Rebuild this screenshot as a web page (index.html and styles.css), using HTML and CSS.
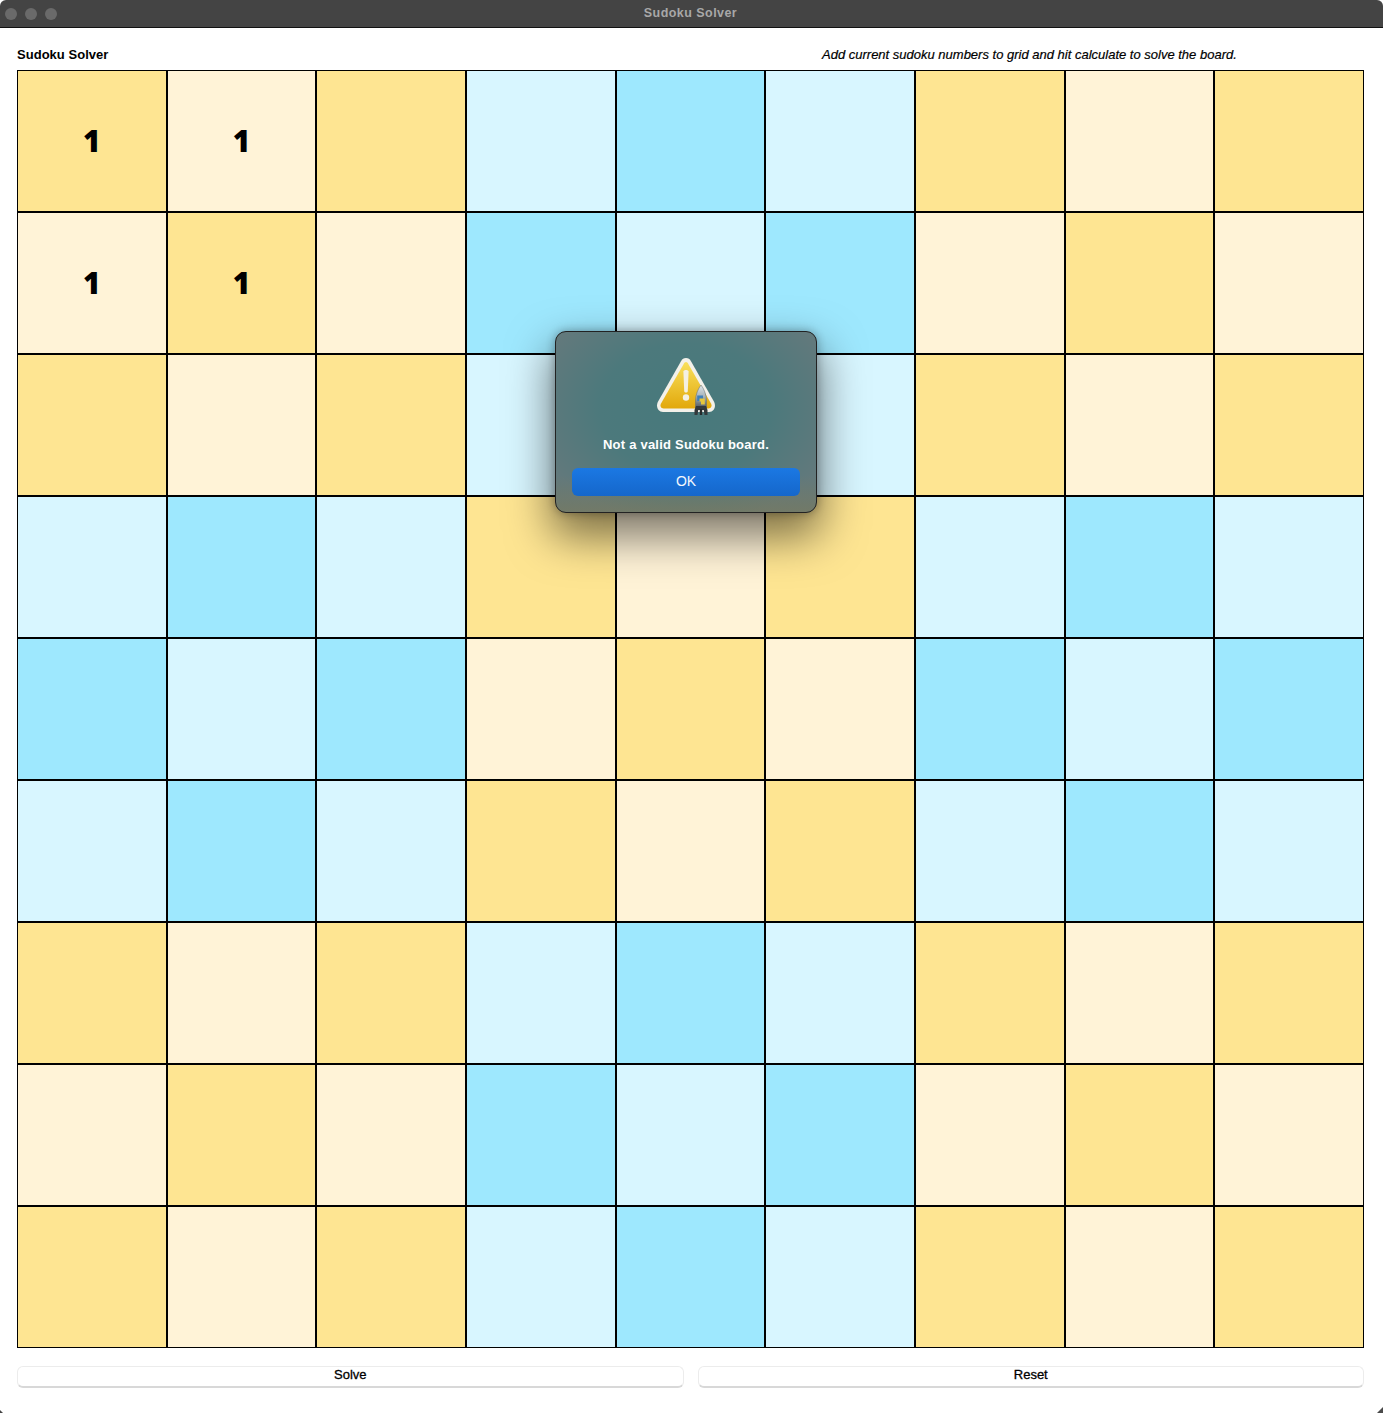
FILE: index.html
```html
<!DOCTYPE html>
<html lang="en">
<head>
<meta charset="utf-8">
<title>Sudoku Solver</title>
<link rel="stylesheet" href="styles.css">
</head>
<body>
<div class="window">
  <header class="titlebar">
    <div class="lights"><span class="light"></span><span class="light"></span><span class="light"></span></div>
    <div class="title">Sudoku Solver</div>
  </header>
  <main class="content">
    <div class="heading">
      <h1 class="app-name">Sudoku Solver</h1>
      <p class="hint">Add current sudoku numbers to grid and hit calculate to solve the board.</p>
    </div>
    <div class="board">
      <div class="cell y">1</div><div class="cell c">1</div><div class="cell y"></div><div class="cell l"></div><div class="cell b"></div><div class="cell l"></div><div class="cell y"></div><div class="cell c"></div><div class="cell y"></div>
      <div class="cell c">1</div><div class="cell y">1</div><div class="cell c"></div><div class="cell b"></div><div class="cell l"></div><div class="cell b"></div><div class="cell c"></div><div class="cell y"></div><div class="cell c"></div>
      <div class="cell y"></div><div class="cell c"></div><div class="cell y"></div><div class="cell l"></div><div class="cell b"></div><div class="cell l"></div><div class="cell y"></div><div class="cell c"></div><div class="cell y"></div>
      <div class="cell l"></div><div class="cell b"></div><div class="cell l"></div><div class="cell y"></div><div class="cell c"></div><div class="cell y"></div><div class="cell l"></div><div class="cell b"></div><div class="cell l"></div>
      <div class="cell b"></div><div class="cell l"></div><div class="cell b"></div><div class="cell c"></div><div class="cell y"></div><div class="cell c"></div><div class="cell b"></div><div class="cell l"></div><div class="cell b"></div>
      <div class="cell l"></div><div class="cell b"></div><div class="cell l"></div><div class="cell y"></div><div class="cell c"></div><div class="cell y"></div><div class="cell l"></div><div class="cell b"></div><div class="cell l"></div>
      <div class="cell y"></div><div class="cell c"></div><div class="cell y"></div><div class="cell l"></div><div class="cell b"></div><div class="cell l"></div><div class="cell y"></div><div class="cell c"></div><div class="cell y"></div>
      <div class="cell c"></div><div class="cell y"></div><div class="cell c"></div><div class="cell b"></div><div class="cell l"></div><div class="cell b"></div><div class="cell c"></div><div class="cell y"></div><div class="cell c"></div>
      <div class="cell y"></div><div class="cell c"></div><div class="cell y"></div><div class="cell l"></div><div class="cell b"></div><div class="cell l"></div><div class="cell y"></div><div class="cell c"></div><div class="cell y"></div>
    </div>
    <div class="actions">
      <button class="action">Solve</button>
      <button class="action">Reset</button>
    </div>
  </main>
  <svg class="corner corner-left" viewBox="0 0 3 3" width="3" height="3"><path d="M0 0 3 3H0Z" fill="#444"/></svg>
  <svg class="corner corner-right" viewBox="0 0 6 6" width="6" height="6"><path d="M6 0V6H0Z" fill="#4a4a4a"/></svg>
  <div class="dialog" role="alertdialog">
    <svg class="alert-icon" viewBox="0 0 60 60" width="60" height="60">
      <defs>
        <linearGradient id="amber" x1="0" y1="0" x2="0" y2="1">
          <stop offset="0" stop-color="#f9e05c"/>
          <stop offset="1" stop-color="#e2a80b"/>
        </linearGradient>
        <linearGradient id="hull" x1="0" y1="0" x2="0" y2="1">
          <stop offset="0" stop-color="#dfe4e6"/>
          <stop offset="0.5" stop-color="#a6b3bb"/>
          <stop offset="1" stop-color="#4f565b"/>
        </linearGradient>
      </defs>
      <path d="M30 1 C27.6 1 26.2 2.2 25 4.2 L1.8 45 C-0.2 49.6 1.8 55 7 55 L53 55 C58.2 55 60.2 49.6 58.2 45 L35 4.2 C33.8 2.2 32.4 1 30 1Z" fill="#f3f1ea"/>
      <path d="M30 5 C29 5 28.4 5.7 27.7 6.9 L5 46.6 C3.7 49 4.8 51.5 7.6 51.5 L52.4 51.5 C55.2 51.5 56.3 49 55 46.6 L32.3 6.9 C31.6 5.7 31 5 30 5Z" fill="url(#amber)"/>
      <path d="M27.4 14.5 C27.4 12.4 32.6 12.4 32.6 14.5 L31.8 34 C31.7 36 28.3 36 28.2 34Z" fill="#f4f0e2"/>
      <circle cx="30" cy="40.5" r="3.2" fill="#f4f0e2"/>
      <path d="M45 28 C47.8 31.5 50.5 37.5 50.5 44 L50.5 51 L39.5 51 L39.5 44 C39.5 37.5 42.2 31.5 45 28Z" fill="url(#hull)" stroke="#5e686e" stroke-width=".5"/>
      <path d="M41.2 38.5 H47 L47 42.5 H45 V44 H41.2Z" fill="#3f7fb8"/>
      <path d="M48.8 41.5 H43.5 L43.5 44.5 H45 V47.5 H48.8Z" fill="#e6c63c"/>
      <path d="M40 49 L38.5 53 L38.5 58 L41.5 58 L42.2 53 L47.8 53 L48.5 58 L51.5 58 L51.5 53 L50 49Z" fill="#33383b"/>
      <path d="M43.8 52 h2.4 v6 h-2.4z" fill="#25292b"/>
    </svg>
    <p class="message">Not a valid Sudoku board.</p>
    <button class="ok">OK</button>
  </div>
</div>
</body>
</html>
```
FILE: styles.css
```css
* { box-sizing: border-box; }
html, body { margin: 0; padding: 0; background: #fff; }
body { font-family: "Liberation Sans", Arial, sans-serif; color: #000; }
.window { position: relative; width: 1383px; height: 1413px; overflow: hidden; }
.titlebar { position: relative; height: 28px; background: #444; border-bottom: 1px solid #111; border-radius: 6px 6px 0 0; display: flex; align-items: center; padding-left: 5px; }
.lights { display: flex; gap: 8px; }
.light { width: 12px; height: 12px; border-radius: 50%; background: #6a6a6a; }
.title { position: absolute; left: 0; right: 2px; top: 6px; text-align: center; font-size: 12.5px; line-height: 15px; font-weight: 700; color: #a8a8a8; letter-spacing: .45px; }
.content { padding: 0 19px 0 17px; }
.heading { display: flex; height: 42px; align-items: flex-start; padding-top: 19px; }
.app-name { margin: 0; width: 805px; font-size: 13px; line-height: 15px; font-weight: 700; letter-spacing: .03px; }
.hint { margin: 0; font-size: 13px; line-height: 15px; font-style: italic; -webkit-text-stroke: .2px #000; }
.board { display: grid; grid-template-columns: repeat(9, 1fr); grid-template-rows: repeat(9, 140px); gap: 2px; padding: 1px; background: #000; height: 1278px; }
.cell { display: flex; align-items: center; justify-content: center; padding-bottom: 2px; font-family: "Open Sans", Roboto, sans-serif; font-size: 30px; font-weight: 800; }
.y { background: #fee592; }
.c { background: #fff3d7; }
.l { background: #d8f6ff; }
.b { background: #9ee8fe; }
.actions { display: flex; gap: 14px; margin-top: 18px; }
.action { flex: 1; height: 22px; padding: 0 0 5px; background: #fff; border: 1px solid #ececec; border-bottom: 2px solid #d8d8d8; border-radius: 6px; font-family: inherit; font-size: 13px; font-weight: 400; -webkit-text-stroke: .3px #000; color: #000; }
.corner { position: absolute; bottom: 0; }
.corner-left { left: 0; }
.corner-right { right: 0; }
.dialog { position: absolute; left: 555px; top: 331px; width: 262px; height: 182px; display: flex; flex-direction: column; align-items: center; padding: 25px 17px 0; border: 1px solid #222; border-radius: 11px; background: linear-gradient(to top, rgba(125, 122, 90, .6), rgba(125, 122, 90, 0) 20%), radial-gradient(ellipse 60% 65% at 50% 42%, #47797c 0%, #4c797c 55%, #62797c 100%), #62797c; box-shadow: 0 20px 44px 4px rgba(0, 0, 0, .5), 0 0 10px rgba(0, 0, 0, .3); }
.alert-icon { display: block; flex: none; }
.message { margin: 20px 0 0; font-size: 13px; line-height: 15px; font-weight: 700; color: #fff; letter-spacing: .23px; white-space: nowrap; }
.ok { width: 228px; height: 28px; flex: none; margin-top: 16px; padding: 0 0 2px; background: linear-gradient(#1b78e3, #1567cb); border: 0; border-radius: 6px; font-family: inherit; font-size: 14px; color: #f4f8fd; }
```
